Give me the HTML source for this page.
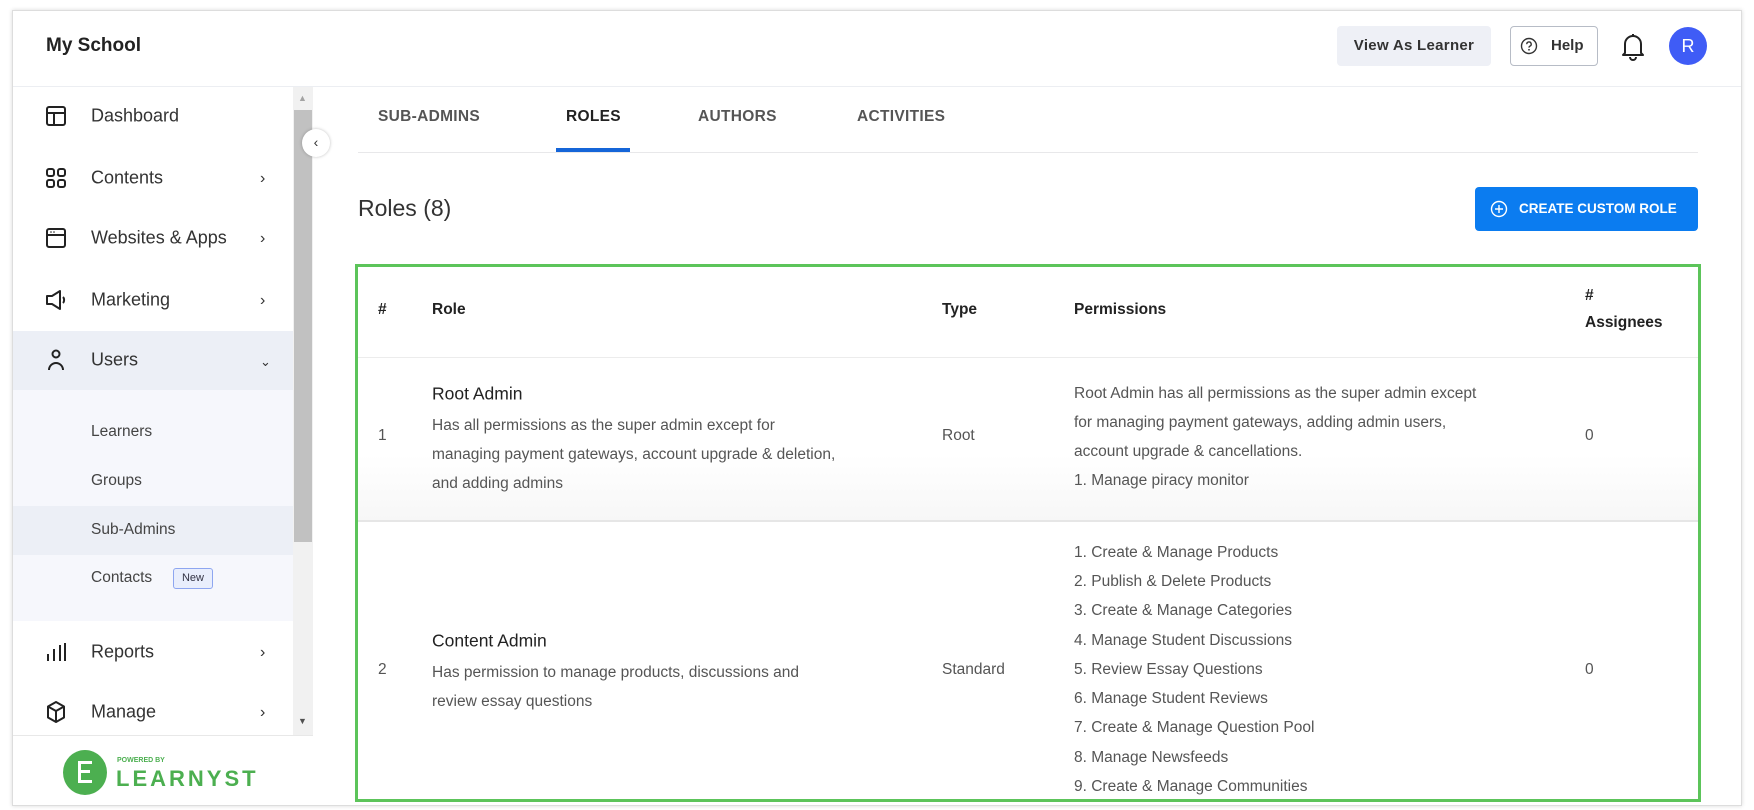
<!DOCTYPE html>
<html><head><meta charset="utf-8"><style>
*{box-sizing:border-box;margin:0;padding:0}
body{width:1754px;height:810px;background:#fff;font-family:"Liberation Sans",sans-serif;color:#222;position:relative;overflow:hidden}
.a{position:absolute;white-space:nowrap}
.frame{position:absolute;left:12px;top:10px;width:1730px;height:796px;border:1px solid #ddd;box-shadow:0 0 4px rgba(0,0,0,.15)}
.mi{position:absolute;left:91px;font-size:18px;color:#333;transform:translateY(-50%)}
.ic{position:absolute;left:45px;transform:translateY(-50%)}
.chev{position:absolute;left:260px;font-size:16px;color:#333;transform:translateY(-50%)}
.sub{position:absolute;left:91px;font-size:15.5px;color:#444;transform:translateY(-50%)}
.tab{position:absolute;font-size:15.5px;font-weight:bold;color:#555;top:117px;transform:translateY(-50%);letter-spacing:.3px}
.th{position:absolute;font-size:15.5px;font-weight:bold;color:#222;transform:translateY(-50%)}
.td{position:absolute;font-size:15.5px;color:#555;transform:translateY(-50%)}
</style></head><body>
<div class="frame"></div>
<!-- header -->
<div class="a" style="left:46px;top:35px;font-size:19px;font-weight:bold;color:#222">My School</div>
<div class="a" style="left:13px;top:86px;width:1728px;height:1px;background:#eceef2"></div>
<div class="a" style="left:1337px;top:26px;width:154px;height:40px;background:#eef0f6;border-radius:4px;font-size:15px;font-weight:bold;color:#333;line-height:40px;text-align:center;letter-spacing:.3px">View As Learner</div>
<div class="a" style="left:1510px;top:26px;width:88px;height:40px;border:1px solid #b7bcc6;border-radius:4px;font-size:15px;font-weight:bold;color:#333;line-height:38px;padding-left:40px">Help</div>
<svg class="a" style="left:1520px;top:37px" width="18" height="18" viewBox="0 0 18 18"><circle cx="9" cy="9" r="7.5" fill="none" stroke="#333" stroke-width="1.4"/><path d="M6.8 7.2a2.2 2.2 0 1 1 3 2c-.6.3-.8.7-.8 1.4" fill="none" stroke="#333" stroke-width="1.4"/><circle cx="9" cy="12.8" r=".9" fill="#333"/></svg>
<svg class="a" style="left:1620px;top:32px" width="26" height="30" viewBox="0 0 26 30"><path d="M5 21V12a8 8 0 0 1 16 0v9l2 2H3z" fill="none" stroke="#222" stroke-width="2" stroke-linejoin="round"/><path d="M10 25a3 3 0 0 0 6 0" fill="none" stroke="#222" stroke-width="2"/><path d="M13 2v2" stroke="#222" stroke-width="2"/></svg>
<div class="a" style="left:1669px;top:27px;width:38px;height:38px;border-radius:50%;background:#3f5cf6;color:#fff;font-size:18px;line-height:38px;text-align:center">R</div>
<!-- sidebar -->
<div class="a" style="left:13px;top:331px;width:280px;height:59px;background:#eceff6"></div>
<div class="a" style="left:13px;top:390px;width:280px;height:231px;background:#f6f7fc"></div>
<div class="a" style="left:13px;top:506px;width:280px;height:49px;background:#eceff6"></div>
<div class="a" style="left:293px;top:87px;width:20px;height:648px;background:#f1f1f1"></div>
<div class="a" style="left:294px;top:110px;width:18px;height:432px;background:#c1c1c1"></div>
<div class="a" style="left:298px;top:93px;font-size:9px;color:#a3a3a3">▲</div>
<div class="a" style="left:298px;top:716px;font-size:9px;color:#505050">▼</div>
<div class="a" style="left:302px;top:129px;width:28px;height:28px;border-radius:50%;background:#fff;box-shadow:0 0 3px rgba(0,0,0,.25);font-size:14px;line-height:27px;text-align:center;color:#333">‹</div>

<svg class="ic" style="top:116px" width="22" height="22" viewBox="0 0 22 22"><rect x="2" y="2" width="18" height="18" rx="2" fill="none" stroke="#222" stroke-width="2"/><path d="M2 8h18M9 8v12" stroke="#222" stroke-width="2"/></svg>
<div class="mi" style="top:116px">Dashboard</div>
<svg class="ic" style="top:178px" width="22" height="22" viewBox="0 0 22 22"><g fill="none" stroke="#222" stroke-width="2"><rect x="2" y="2" width="7" height="7" rx="2"/><rect x="13" y="2" width="7" height="7" rx="2"/><rect x="2" y="13" width="7" height="7" rx="2"/><rect x="13" y="13" width="7" height="7" rx="2"/></g></svg>
<div class="mi" style="top:178px">Contents</div><div class="chev" style="top:179px">›</div>
<svg class="ic" style="top:238px" width="22" height="22" viewBox="0 0 22 22"><rect x="2" y="2" width="18" height="18" rx="2" fill="none" stroke="#222" stroke-width="2"/><path d="M2 8h18" stroke="#222" stroke-width="2"/><circle cx="6" cy="5" r=".8" fill="#222"/><circle cx="9" cy="5" r=".8" fill="#222"/></svg>
<div class="mi" style="top:238px">Websites &amp; Apps</div><div class="chev" style="top:239px">›</div>
<svg class="ic" style="top:300px" width="24" height="22" viewBox="0 0 24 22"><path d="M2 7h5l8-5v18l-8-5H2z" fill="none" stroke="#222" stroke-width="2" stroke-linejoin="round"/><path d="M18 8c1.5 1.5 1.5 4.5 0 6" fill="none" stroke="#222" stroke-width="2"/></svg>
<div class="mi" style="top:300px">Marketing</div><div class="chev" style="top:301px">›</div>
<svg class="ic" style="top:360px" width="22" height="24" viewBox="0 0 22 24"><circle cx="11" cy="6" r="3.5" fill="none" stroke="#222" stroke-width="2"/><path d="M4 22a7 7 0 0 1 14 0" fill="none" stroke="#222" stroke-width="2"/></svg>
<div class="mi" style="top:360px">Users</div><div class="chev" style="top:362px;font-size:13px">⌄</div>
<div class="sub" style="top:432px">Learners</div>
<div class="sub" style="top:481px">Groups</div>
<div class="sub" style="top:530px">Sub-Admins</div>
<div class="sub" style="top:578px">Contacts</div>
<div class="a" style="left:173px;top:568px;width:40px;height:21px;border:1px solid #8ea6f0;background:#e9eefc;border-radius:3px;font-size:11px;color:#334;line-height:19px;text-align:center">New</div>
<svg class="ic" style="top:652px" width="22" height="22" viewBox="0 0 22 22"><path d="M3 20v-7M9 20V8M15 20V4M20 20V2" stroke="#222" stroke-width="2"/></svg>
<div class="mi" style="top:652px">Reports</div><div class="chev" style="top:653px">›</div>
<svg class="ic" style="top:712px" width="22" height="24" viewBox="0 0 22 24"><path d="M11 2l8 4.5v11L11 22l-8-4.5v-11z M3 6.5l8 4.5 8-4.5M11 11v11" fill="none" stroke="#222" stroke-width="2" stroke-linejoin="round"/></svg>
<div class="mi" style="top:712px">Manage</div><div class="chev" style="top:713px">›</div>
<div class="a" style="left:13px;top:735px;width:300px;height:1px;background:#e8e8e8"></div>
<div class="a" style="left:63px;top:750px;width:44px;height:45px;border-radius:50%;background:#4caf50"></div>
<div class="a" style="left:78px;top:761px;width:14px;height:22px;border:3px solid #fff;border-right:none"></div>
<div class="a" style="left:81px;top:770px;width:9px;height:3px;background:#fff"></div>
<div class="a" style="left:117px;top:757px;font-size:7px;font-weight:bold;color:#4caf50">POWERED BY</div>
<div class="a" style="left:116px;top:766px;font-size:22px;font-weight:bold;color:#4caf50;letter-spacing:3px">LEARNYST</div>
<!-- tabs -->
<div class="tab" style="left:378px">SUB-ADMINS</div>
<div class="tab" style="left:566px;color:#222">ROLES</div>
<div class="tab" style="left:698px">AUTHORS</div>
<div class="tab" style="left:857px">ACTIVITIES</div>
<div class="a" style="left:358px;top:152px;width:1340px;height:1px;background:#e8e8ea"></div>
<div class="a" style="left:556px;top:148px;width:74px;height:4px;background:#1565d8"></div>
<div class="a" style="left:358px;top:195px;font-size:23px;color:#333">Roles (8)</div>
<div class="a" style="left:1475px;top:187px;width:223px;height:44px;background:#0b7cf0;border-radius:4px;color:#fff;font-size:13.5px;font-weight:bold;line-height:44px;padding-left:44px">CREATE CUSTOM ROLE</div>
<svg class="a" style="left:1490px;top:200px" width="18" height="18" viewBox="0 0 18 18"><circle cx="9" cy="9" r="7.5" fill="none" stroke="#fff" stroke-width="1.4"/><path d="M9 5v8M5 9h8" stroke="#fff" stroke-width="1.4"/></svg>
<!-- table -->
<div class="a" style="left:355px;top:264px;width:1346px;height:538px;border:3px solid #5cc45a"></div>
<div class="a" style="left:358px;top:357px;width:1340px;height:1px;background:#ececec"></div>
<div class="a" style="left:358px;top:358px;width:1340px;height:162px;background:linear-gradient(#fff 60%,#f7f7f7)"></div>
<div class="a" style="left:358px;top:520px;width:1340px;height:2px;background:#e6e6e6"></div>
<div class="th" style="left:378px;top:310px">#</div>
<div class="th" style="left:432px;top:310px">Role</div>
<div class="th" style="left:942px;top:310px">Type</div>
<div class="th" style="left:1074px;top:310px">Permissions</div>
<div class="th" style="left:1585px;top:296px">#</div>
<div class="th" style="left:1585px;top:323px">Assignees</div>

<div class="td" style="left:378px;top:436px">1</div>
<div class="td" style="left:432px;top:394px;font-size:17.5px;color:#222">Root Admin</div>
<div class="td" style="left:432px;top:426px">Has all permissions as the super admin except for</div>
<div class="td" style="left:432px;top:455px">managing payment gateways, account upgrade &amp; deletion,</div>
<div class="td" style="left:432px;top:484px">and adding admins</div>
<div class="td" style="left:942px;top:436px">Root</div>
<div class="td" style="left:1074px;top:394px">Root Admin has all permissions as the super admin except</div>
<div class="td" style="left:1074px;top:423px">for managing payment gateways, adding admin users,</div>
<div class="td" style="left:1074px;top:452px">account upgrade &amp; cancellations.</div>
<div class="td" style="left:1074px;top:481px">1. Manage piracy monitor</div>
<div class="td" style="left:1585px;top:436px">0</div>

<div class="td" style="left:378px;top:670px">2</div>
<div class="td" style="left:432px;top:641px;font-size:17.5px;color:#222">Content Admin</div>
<div class="td" style="left:432px;top:673px">Has permission to manage products, discussions and</div>
<div class="td" style="left:432px;top:702px">review essay questions</div>
<div class="td" style="left:942px;top:670px">Standard</div>
<div class="td" style="left:1074px;top:553px">1. Create &amp; Manage Products</div>
<div class="td" style="left:1074px;top:582px">2. Publish &amp; Delete Products</div>
<div class="td" style="left:1074px;top:611px">3. Create &amp; Manage Categories</div>
<div class="td" style="left:1074px;top:641px">4. Manage Student Discussions</div>
<div class="td" style="left:1074px;top:670px">5. Review Essay Questions</div>
<div class="td" style="left:1074px;top:699px">6. Manage Student Reviews</div>
<div class="td" style="left:1074px;top:728px">7. Create &amp; Manage Question Pool</div>
<div class="td" style="left:1074px;top:758px">8. Manage Newsfeeds</div>
<div class="td" style="left:1074px;top:787px">9. Create &amp; Manage Communities</div>
<div class="td" style="left:1585px;top:670px">0</div>
</body></html>
